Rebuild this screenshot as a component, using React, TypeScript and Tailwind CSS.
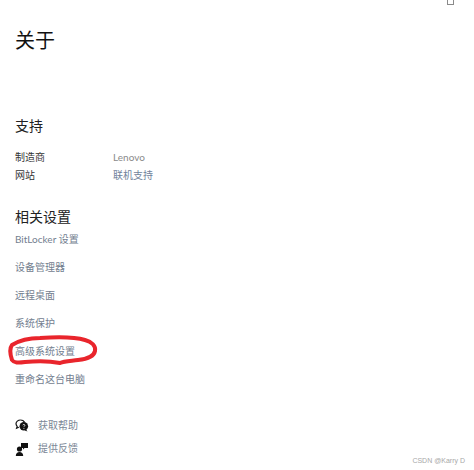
const F = "font-['Lato','Noto_Sans_CJK_SC',sans-serif]";

function HelpIcon() {
  return (
    <svg width="14" height="13" viewBox="0 0 14 13" className="shrink-0">
      <path d="M5.5 1C3 1 1 2.7 1 4.8c0 1 .5 1.9 1.2 2.6L1.6 9.2l2.2-1" fill="none" stroke="#111" strokeWidth="1.2" />
      <path d="M5.5 1c1.8 0 3.3.9 4 2.1" fill="none" stroke="#111" strokeWidth="1.2" />
      <circle cx="8.8" cy="7.2" r="4.3" fill="#111" />
      <path d="M11 10.5l1.5 2-2.8-1z" fill="#111" />
      <path d="M7.7 6.2c.2-1 2.2-1 2.2.1 0 .8-1 .8-1 1.5" fill="none" stroke="#fff" strokeWidth=".8" />
      <circle cx="8.9" cy="9.2" r=".55" fill="#fff" />
    </svg>
  );
}

function FeedbackIcon() {
  return (
    <svg width="14" height="14" viewBox="0 0 14 14" className="shrink-0">
      <path d="M6 1h7v5H9.5L8 7.5V6H6z" fill="#111" />
      <circle cx="4.5" cy="7" r="2.6" fill="#111" />
      <path d="M0.8 14c0-2.8 1.6-4 3.7-4s3.7 1.2 3.7 4z" fill="#111" />
    </svg>
  );
}

const links = ["BitLocker 设置", "设备管理器", "远程桌面", "系统保护", "高级系统设置", "重命名这台电脑"];

export default function App() {
  return (
    <div className={`relative w-[474px] h-[470px] overflow-hidden bg-white pl-[15px] ${F}`}>
      <div className="absolute left-[447px] top-[-3px] w-[7px] h-[8px] border border-[#8a8a8a]" />

      <h1 className="pt-[28px] h-[52px] text-[20px] leading-[24px] font-normal text-[#111]">关于</h1>

      <h2 className="mt-[64px] text-[14px] leading-[20px] font-normal text-[#222]">支持</h2>
      <div className="mt-[12px] grid grid-cols-[98px_1fr] auto-rows-[18px] text-[10px] leading-[18px]">
        <span className="text-[#333]">制造商</span>
        <span className="text-[#8a8a8a]">Lenovo</span>
        <span className="text-[#333]">网站</span>
        <span className="text-[#71829b]">联机支持</span>
      </div>

      <h2 className="mt-[23px] text-[14px] leading-[20px] font-normal text-[#222]">相关设置</h2>
      <div className="mt-[-2px] flex flex-col text-[10px] leading-[28px] text-[#73808f]">
        {links.map((l) => (
          <span key={l} className="h-[28px]">{l}</span>
        ))}
      </div>

      <div className="mt-[21px] flex flex-col text-[10px] text-[#7b8796]">
        <div className="flex h-[23px] items-center gap-[9px]">
          <HelpIcon />
          <span>获取帮助</span>
        </div>
        <div className="flex h-[23px] items-center gap-[9px]">
          <FeedbackIcon />
          <span>提供反馈</span>
        </div>
      </div>

      <svg className="absolute left-0 top-[330px]" width="110" height="40" viewBox="0 0 110 40">
        <path
          d="M12 30C10 24 9 19 12 15C20 10 30 8 40 8C55 7 75 7 85 10C92 12 96 16 95 21C94 26 88 29 78 30C70 31 64 31 60 33C50 31 35 31 25 32C18 33 14 33 12 30Z"
          fill="none"
          stroke="#e9252c"
          strokeWidth="4"
          strokeLinejoin="round"
        />
      </svg>

      <span className="absolute right-[9px] top-[455px] font-['Liberation_Sans',sans-serif] text-[7px] leading-[12px] text-[#a8a8a8]">CSDN @Karry D</span>
    </div>
  );
}
